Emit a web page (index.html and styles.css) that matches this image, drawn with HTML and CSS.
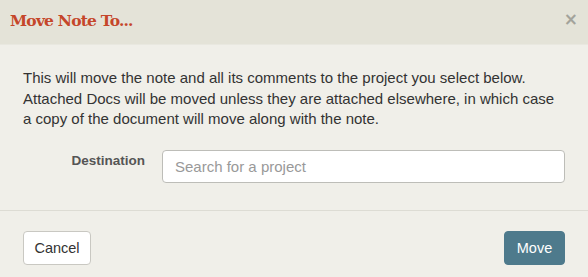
FILE: index.html
```html
<!DOCTYPE html>
<html>
<head>
<meta charset="utf-8">
<link rel="stylesheet" href="styles.css">
</head>
<body>
<div class="dialog">
  <div class="header">
    <h1 class="title">Move Note To...</h1>
    <span class="close">&#215;</span>
  </div>
  <div class="content">
    <p class="desc">This will move the note and all its comments to the project you select below. Attached Docs will be moved unless they are attached elsewhere, in which case a copy of the document will move along with the note.</p>
    <div class="field">
      <label class="label">Destination</label>
      <input class="input" type="text" placeholder="Search for a project">
    </div>
  </div>
  <div class="footer">
    <button class="btn btn-cancel">Cancel</button>
    <button class="btn btn-move">Move</button>
  </div>
</div>
</body>
</html>
```
FILE: styles.css
```css
html, body {
  margin: 0;
  padding: 0;
  background: #f0efe9;
}
.dialog {
  width: 588px;
  height: 277px;
  font-family: "Liberation Sans", Arial, sans-serif;
  color: #333;
}
.header {
  height: 45px;
  background: #e4e3d8;
  border-bottom: 1px solid #e9e8e0;
  display: flex;
  align-items: center;
  justify-content: space-between;
  padding: 0 10px 0 10px;
  box-sizing: border-box;
}
.title {
  margin: 0;
  font-family: "DejaVu Serif", serif;
  font-weight: bold;
  font-size: 15.5px;
  color: #c5462a;
  letter-spacing: -0.8px;
  padding-bottom: 4px;
}
.close {
  font-family: "DejaVu Sans", sans-serif;
  font-weight: bold;
  font-size: 17px;
  color: #a3a39b;
  padding-bottom: 6px;
}
.content {
  padding: 23px 23px 0 23px;
  height: 166px;
  box-sizing: border-box;
  border-bottom: 1px solid #dddcd4;
}
.desc {
  margin: 0;
  font-size: 15px;
  line-height: 20.5px;
}
.field {
  display: flex;
  align-items: center;
  margin-top: 20px;
}
.label {
  width: 139px;
  text-align: right;
  padding-right: 17px;
  box-sizing: border-box;
  font-weight: bold;
  font-size: 13.5px;
  color: #555;
  padding-bottom: 11px;
}
.input {
  width: 403px;
  height: 33px;
  box-sizing: border-box;
  border: 1px solid #bdbdb8;
  border-radius: 4px;
  background: #fff;
  padding: 0 12px;
  font-family: "Liberation Sans", Arial, sans-serif;
  font-size: 15px;
  color: #333;
  outline: none;
}
.input::placeholder {
  color: #999;
}
.footer {
  display: flex;
  justify-content: space-between;
  align-items: center;
  padding: 20px 23px 0 23px;
}
.btn {
  height: 34px;
  border-radius: 4px;
  font-family: "Liberation Sans", Arial, sans-serif;
  font-size: 14.5px;
  cursor: pointer;
}
.btn-cancel {
  width: 68px;
  background: #fff;
  border: 1px solid #c9c8c2;
  color: #333;
}
.btn-move {
  width: 61px;
  background: #4e7a8c;
  border: 1px solid #4e7a8c;
  color: #fff;
}
```
